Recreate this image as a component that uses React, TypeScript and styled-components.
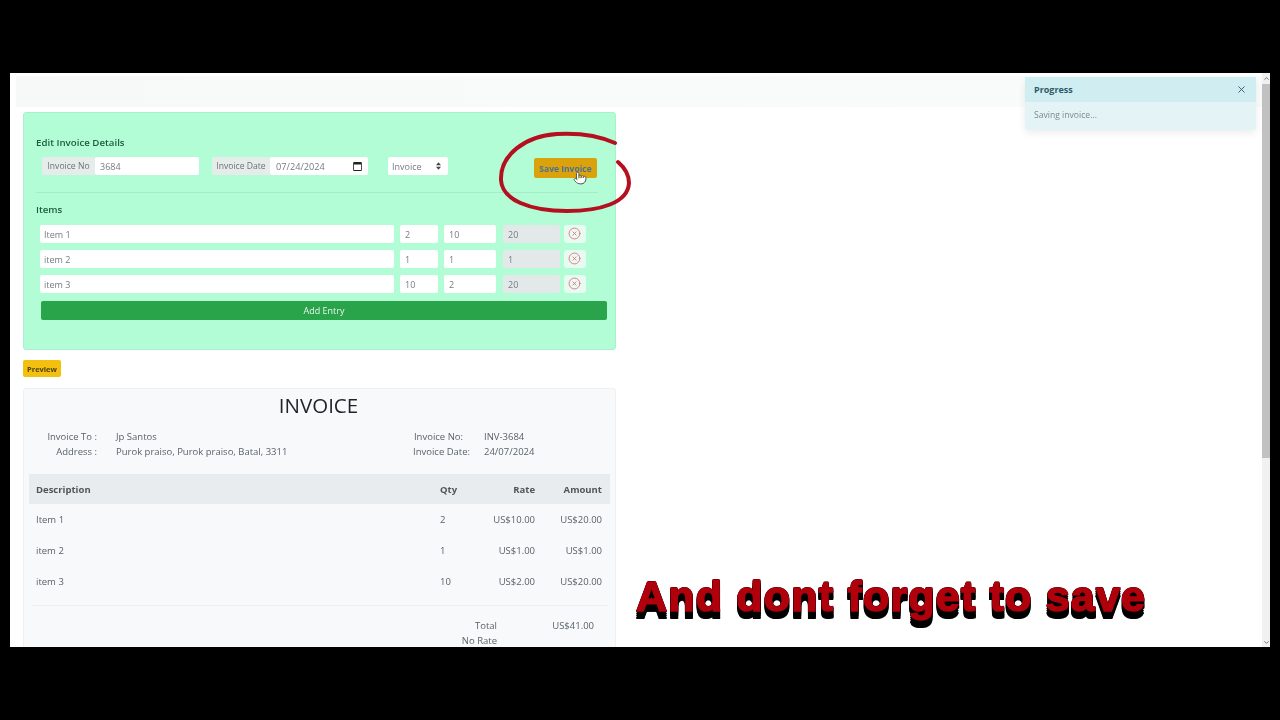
import React from 'react';
import styled, { createGlobalStyle } from 'styled-components';
import { CircleX, X, ChevronUp, ChevronDown, Pointer } from 'lucide-react';

const Global = createGlobalStyle`
  html, body { margin: 0; padding: 0; background: #000; overflow: hidden; }
  body { font-family: "Open Sans", "Noto Sans", sans-serif; }
  * { box-sizing: border-box; }
`;

const Stage = styled.div`
  width: 1280px; height: 720px; background: #000; padding: 73px 10px; position: relative; overflow: hidden;
`;
const Frame = styled.div`
  width: 1260px; height: 574px; background: #fff; display: flex; overflow: hidden; filter: blur(0.35px);
`;
const Content = styled.div`
  width: 1252px; height: 574px; overflow: hidden; color: #59626a; font-size: 9.5px;
`;
const Navbar = styled.div`
  height: 31px; margin: 3px 0 5px 6px; background: linear-gradient(90deg, #f7f8f8, #fafbfb);
`;
const Main = styled.main`
  width: 593px; margin-left: 13px;
`;
const EditCard = styled.section`
  height: 238px; background: #b2fdd6; border: 1px solid #a9f0cb; border-radius: 3px; padding: 23px 8px 0 12px;
`;
const SectionTitle = styled.h2`
  margin: 0; font-size: 9.7px; line-height: 14px; font-weight: 600; color: #1f5b40;
`;
const HeaderRow = styled.div`
  display: flex; align-items: flex-start; margin: 7px 0 0 6px; height: 27px;
`;
const Group = styled.div<{ $width: number; $gap?: number }>`
  display: flex; height: 18px; width: ${p => p.$width}px; margin-left: ${p => p.$gap ?? 0}px;
`;
const GroupLabel = styled.span<{ $width: number }>`
  width: ${p => p.$width}px; flex: none; background: #e6ecea; color: #6a7278; display: flex; align-items: center;
  justify-content: center; border-radius: 2px 0 0 2px; font-size: 8.6px;
`;
const Field = styled.div<{ $width?: number; $off?: boolean; $ml?: number }>`
  ${p => (p.$width ? `width: ${p.$width}px; flex: none;` : 'flex: 1;')}
  margin-left: ${p => p.$ml ?? 0}px;
  height: 18px; background: ${p => (p.$off ? '#e3e8e9' : '#fff')}; border-radius: 2px; color: #757c81;
  display: flex; align-items: center; justify-content: space-between; padding: 0 5px 0 5px; font-size: 9px;
`;
const DateField = styled(Field)`
  padding: 0 6px; font-size: 9.2px;
`;
const SelectBox = styled(Field)`
  padding: 0 7px 0 4px;
`;
const ItemName = styled(Field)`
  padding-left: 4px;
`;
const SaveButton = styled.button`
  width: 63px; height: 20px; margin: 1px 0 0 86px; padding: 0; border: 0; border-radius: 2px; background: #daa30c;
  color: #4c7193; font: 700 8.5px "Open Sans", sans-serif;
`;
const Rule = styled.hr`
  border: 0; border-top: 1px solid #a6ecc7; margin: 8px 9px 0 0;
`;
const ItemsTitle = styled(SectionTitle)`
  margin-top: 10px;
`;
const ItemRows = styled.div`
  display: flex; flex-direction: column; gap: 7px; margin: 8px 0 0 4px;
`;
const ItemRow = styled.div`
  display: flex; align-items: center;
`;
const DeleteButton = styled.button`
  width: 22px; height: 18px; margin-left: 4px; padding: 0 1px 1px 0; border: 0; border-radius: 3px; background: #e8fbf1;
  display: flex; align-items: center; justify-content: center; color: #e0607f;
`;
const AddButton = styled.button`
  display: block; width: 566px; height: 19px; margin: 8px 0 0 5px; padding: 0; border: 0; border-radius: 2px;
  background: #2aa44a; color: #e6f5ea; font: 400 9px "Open Sans", sans-serif;
`;
const PreviewButton = styled.button`
  display: block; width: 38px; height: 17px; margin: 10px 0 11px; padding: 0; border: 0; border-radius: 2px;
  background: #f4c00f; color: #4d4210; font: 700 7.5px "Open Sans", sans-serif;
`;
const InvoiceCard = styled.section`
  height: 300px; background: #f8f9fa; border: 1px solid #eff0f1; border-radius: 3px; padding: 0 5px;
`;
const InvoiceTitle = styled.h1`
  margin: 4px 0 0; padding-right: 2px; text-align: center; font-size: 20.5px; line-height: 25px; font-weight: 500; color: #1f2326;
`;
const InfoGrid = styled.div`
  display: grid; grid-template-columns: 68px 19px 297px 50px 21px 1fr; margin: 11px 0 15px; line-height: 15px;
`;
const InfoLabel = styled.span`
  text-align: right; white-space: nowrap;
`;
const InfoValue = styled.span`
  white-space: nowrap;
`;
const Spacer = styled.span``;
const TableRow = styled.div<{ $head?: boolean }>`
  display: grid; grid-template-columns: 404px 30px 65px 67px; padding: 0 7px; align-items: center;
  height: ${p => (p.$head ? 30 : 31)}px;
  ${p => p.$head && 'background: #e9ecef; font-weight: 700; color: #4e555b;'}
`;
const Cell = styled.span<{ $right?: boolean }>`
  text-align: ${p => (p.$right ? 'right' : 'left')};
`;
const TableRule = styled.hr`
  border: 0; border-top: 1px solid #eceeef; margin: 8px 2px 0;
`;
const TotalRow = styled.div`
  display: grid; grid-template-columns: 468px 97px; line-height: 15px; margin-top: 12px;
`;
const NoRateRow = styled(TotalRow)`
  margin-top: 0;
`;
const ScrollBar = styled.aside`
  width: 8px; height: 574px; background: #f1f1f1; display: flex; flex-direction: column; color: #666;
`;
const ScrollArrow = styled.div`
  height: 10px; display: flex; align-items: center; justify-content: center;
`;
const ScrollThumb = styled.div`
  height: 374px; margin-top: 1px; background: #c1c1c1;
`;
const ScrollTrack = styled.div`
  flex: 1;
`;
const Toast = styled.div`
  position: absolute; left: 1025px; top: 77px; width: 231px; height: 53px; background: #e4f4f6; border-radius: 3px;
  box-shadow: 0 3px 8px rgba(0,0,0,.08); font-size: 8.6px; color: #7a8a8f; filter: blur(0.3px);
`;
const ToastHead = styled.div`
  height: 25px; background: #d0edf2; display: flex; align-items: center; justify-content: space-between;
  padding: 0 9px; color: #2c5a66; font-weight: 700; font-size: 9px;
`;
const ToastBody = styled.div`
  padding: 7px 9px;
`;
const Oval = styled.svg`
  position: absolute; left: 490px; top: 125px; width: 150px; height: 95px;
`;
const HandCursor = styled.div`
  position: absolute; left: 573px; top: 171px; color: #4a4a4a; line-height: 0;
`;
const Caption = styled.div`
  position: absolute; left: 636px; top: 572px; white-space: nowrap; font: 700 43px/48px "Liberation Sans", Arial, sans-serif;
  letter-spacing: 1.2px; color: #b0000c; -webkit-text-stroke: 1.6px #b0000c; filter: blur(0.4px);
  text-shadow: 1px 0 0 #000, -1px 0 0 #000, 0 -1px 0 #000, 1px 1px 0 #000, -1px 1px 0 #000,
    1px 3px 0 #000, -1px 3px 0 #000, 1px 5px 0 #000, -1px 5px 0 #000, 1px 7px 0 #000, -1px 7px 0 #000, 1px 8px 0 #000, -1px 8px 0 #000;
`;

const items = [
  ['Item 1', '2', '10', '20'],
  ['item 2', '1', '1', '1'],
  ['item 3', '10', '2', '20'],
];
const lines = [
  ['Item 1', '2', 'US$10.00', 'US$20.00'],
  ['item 2', '1', 'US$1.00', 'US$1.00'],
  ['item 3', '10', 'US$2.00', 'US$20.00'],
];

export default function App() {
  return (
    <Stage>
      <Global />
      <Frame>
        <Content>
          <Navbar />
          <Main>
            <EditCard>
              <SectionTitle>Edit Invoice Details</SectionTitle>
              <HeaderRow>
                <Group $width={157}>
                  <GroupLabel $width={53}>Invoice No</GroupLabel>
                  <Field>3684</Field>
                </Group>
                <Group $width={156} $gap={13}>
                  <GroupLabel $width={58}>Invoice Date</GroupLabel>
                  <DateField>
                    07/24/2024
                    <svg width="9" height="10" viewBox="0 0 9 10">
                      <path d="M1 1h7a.8.8 0 0 1 .8.8v7.400a.8.8 0 0 1-.8.8H1a.8.8 0 0 1-.8-.8V1.800A.8.8 0 0 1 1 1zm0 2.500v5.500h7V3.500z" fill="#222" fillRule="evenodd" />
                    </svg>
                  </DateField>
                </Group>
                <SelectBox $width={60} $ml={20}>
                  Invoice
                  <svg width="5" height="8" viewBox="0 0 6 9"><path d="M3 0 6 3.500H0zM3 9 0 5.500h6z" fill="#444" /></svg>
                </SelectBox>
                <SaveButton>Save Invoice</SaveButton>
              </HeaderRow>
              <Rule />
              <ItemsTitle>Items</ItemsTitle>
              <ItemRows>
                {items.map(r => (
                  <ItemRow key={r[0]}>
                    <ItemName $width={354}>{r[0]}</ItemName>
                    <Field $width={38} $ml={6}>{r[1]}</Field>
                    <Field $width={52} $ml={6}>{r[2]}</Field>
                    <Field $width={57} $ml={7} $off>{r[3]}</Field>
                    <DeleteButton><CircleX size={13} strokeWidth={1.5} /></DeleteButton>
                  </ItemRow>
                ))}
              </ItemRows>
              <AddButton>Add Entry</AddButton>
            </EditCard>
            <PreviewButton>Preview</PreviewButton>
            <InvoiceCard>
              <InvoiceTitle>INVOICE</InvoiceTitle>
              <InfoGrid>
                <InfoLabel>Invoice To :</InfoLabel><Spacer /><InfoValue>Jp Santos</InfoValue>
                <InfoLabel>Invoice No:</InfoLabel><Spacer /><InfoValue>INV-3684</InfoValue>
                <InfoLabel>Address :</InfoLabel><Spacer /><InfoValue>Purok praiso, Purok praiso, Batal, 3311</InfoValue>
                <InfoLabel>Invoice Date:</InfoLabel><Spacer /><InfoValue>24/07/2024</InfoValue>
              </InfoGrid>
              <TableRow $head>
                <Cell>Description</Cell>
                <Cell>Qty</Cell>
                <Cell $right>Rate</Cell>
                <Cell $right>Amount</Cell>
              </TableRow>
              {lines.map(l => (
                <TableRow key={l[0]}>
                  <Cell>{l[0]}</Cell>
                  <Cell>{l[1]}</Cell>
                  <Cell $right>{l[2]}</Cell>
                  <Cell $right>{l[3]}</Cell>
                </TableRow>
              ))}
              <TableRule />
              <TotalRow>
                <Cell $right>Total</Cell>
                <Cell $right>US$41.00</Cell>
              </TotalRow>
              <NoRateRow>
                <Cell $right>No Rate</Cell>
              </NoRateRow>
            </InvoiceCard>
          </Main>
        </Content>
        <ScrollBar>
          <ScrollArrow><ChevronUp size={7} strokeWidth={3} /></ScrollArrow>
          <ScrollThumb />
          <ScrollTrack />
          <ScrollArrow><ChevronDown size={7} strokeWidth={3} /></ScrollArrow>
        </ScrollBar>
      </Frame>
      <Toast>
        <ToastHead>Progress<X size={11} strokeWidth={2} /></ToastHead>
        <ToastBody>Saving invoice...</ToastBody>
      </Toast>
      <Oval viewBox="0 0 150 95">
        <path d="M125 18C105 9 85 8 67 9 35 11 10 30 11 55 12 75 40 86 77 86 110 86 138 78 139 58 139 50 135 43 128 37" fill="none" stroke="#b5101f" strokeWidth="4" strokeLinecap="round" />
      </Oval>
      <HandCursor><Pointer size={14} strokeWidth={1.5} fill="#fff" /></HandCursor>
      <Caption>And dont forget to save</Caption>
    </Stage>
  );
}
